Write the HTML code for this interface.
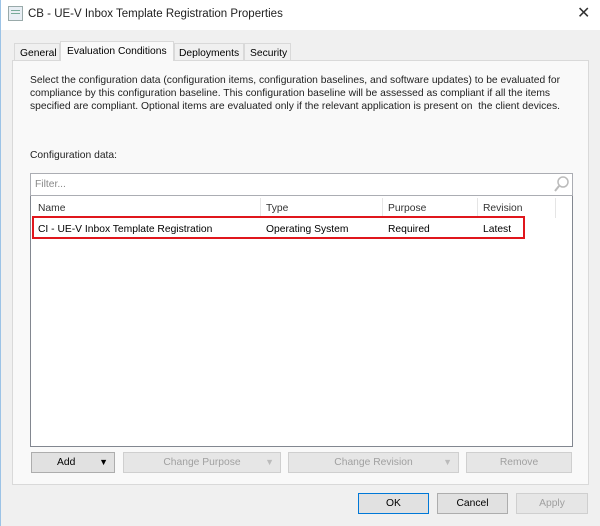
<!DOCTYPE html>
<html><head><meta charset="utf-8"><style>
*{box-sizing:border-box;margin:0;padding:0}
body{width:600px;height:526px;background:#f0f0f0;font-family:"Liberation Sans",sans-serif;font-size:10.3px;color:#000;position:relative;overflow:hidden}
.a{position:absolute}
.t{white-space:nowrap}
.btn{position:absolute;height:21px;border:1px solid #adadad;background:#e1e1e1;text-align:center;line-height:19px;font-size:10.3px}
.dis{color:#a0a0a0;border-color:#cfcfcf;background:#e6e6e6}
</style></head><body>
<div class="a" style="left:0;top:0;width:600px;height:30px;background:#fff"></div>
<div class="a" style="left:0;top:0;width:1px;height:526px;background:#9cc3e6"></div>
<div class="a" style="left:8px;top:6px;width:15px;height:15px;border:1px solid #9aa;background:#e8eef4"></div>
<div class="a" style="left:11px;top:10px;width:9px;height:1px;background:#7a9"></div>
<div class="a" style="left:11px;top:13px;width:9px;height:1px;background:#7a9"></div>
<div class="a t" style="left:28px;top:8px;font-size:11.5px;color:#222">CB - UE-V Inbox Template Registration Properties</div>
<div class="a t" style="left:577px;top:3px;font-size:16px;color:#333">✕</div>

<div class="a" style="left:12px;top:60px;width:577px;height:425px;background:#f9f9f9;border:1px solid #d9d9d9"></div>
<div class="a t" style="left:14px;top:43px;width:46px;height:18px;border:1px solid #d9d9d9;background:#f0f0f0;padding:4px 0 0 5px">General</div>
<div class="a t" style="left:60px;top:41px;width:114px;height:20px;border:1px solid #d9d9d9;border-bottom:none;background:#f9f9f9;padding:4px 0 0 6px">Evaluation Conditions</div>
<div class="a t" style="left:174px;top:43px;width:70px;height:18px;border:1px solid #d9d9d9;background:#f0f0f0;padding:4px 0 0 4px">Deployments</div>
<div class="a t" style="left:244px;top:43px;width:47px;height:18px;border:1px solid #d9d9d9;background:#f0f0f0;padding:4px 0 0 5px">Security</div>

<div class="a t" style="left:30px;top:74px;line-height:13px;color:#222">Select the configuration data (configuration items, configuration baselines, and software updates) to be evaluated for<br>compliance by this configuration baseline. This configuration baseline will be assessed as compliant if all the items<br>specified are compliant. Optional items are evaluated only if the relevant application is present on&nbsp; the client devices.</div>
<div class="a t" style="left:30px;top:150px;color:#222">Configuration data:</div>

<div class="a" style="left:30px;top:173px;width:543px;height:23px;background:#fff;border:1px solid #abadb3"></div>
<div class="a t" style="left:35px;top:179px;color:#888">Filter...</div>
<svg class="a" style="left:553px;top:175px" width="16" height="18"><circle cx="10" cy="7" r="5" fill="none" stroke="#bbb" stroke-width="1.5"/><line x1="6" y1="11" x2="2" y2="16" stroke="#bbb" stroke-width="2"/></svg>

<div class="a" style="left:30px;top:196px;width:543px;height:251px;background:#fff;border:1px solid #828790;border-top:none"></div>
<div class="a" style="left:260px;top:198px;width:1px;height:20px;background:#e5e5e5"></div>
<div class="a" style="left:382px;top:198px;width:1px;height:20px;background:#e5e5e5"></div>
<div class="a" style="left:477px;top:198px;width:1px;height:20px;background:#e5e5e5"></div>
<div class="a" style="left:555px;top:198px;width:1px;height:20px;background:#e5e5e5"></div>
<div class="a t" style="left:38px;top:203px;color:#333">Name</div>
<div class="a t" style="left:266px;top:203px;color:#333">Type</div>
<div class="a t" style="left:388px;top:203px;color:#333">Purpose</div>
<div class="a t" style="left:483px;top:203px;color:#333">Revision</div>
<div class="a" style="left:32px;top:216px;width:493px;height:23px;border:2px solid #e0161c"></div>
<div class="a t" style="left:38px;top:224px">CI - UE-V Inbox Template Registration</div>
<div class="a t" style="left:266px;top:224px">Operating System</div>
<div class="a t" style="left:388px;top:224px">Required</div>
<div class="a t" style="left:483px;top:224px">Latest</div>

<div class="btn" style="left:31px;top:452px;width:84px;text-align:left;padding-left:25px">Add<span style="position:absolute;right:6px;top:0;font-size:9px">▼</span></div>
<div class="btn dis" style="left:123px;top:452px;width:158px">Change Purpose<span style="position:absolute;right:6px;top:0;font-size:9px;color:#bbb">▼</span></div>
<div class="btn dis" style="left:288px;top:452px;width:171px">Change Revision<span style="position:absolute;right:6px;top:0;font-size:9px;color:#bbb">▼</span></div>
<div class="btn dis" style="left:466px;top:452px;width:106px">Remove</div>

<div class="btn" style="left:358px;top:493px;width:71px;border:1px solid #0078d7">OK</div>
<div class="btn" style="left:437px;top:493px;width:71px">Cancel</div>
<div class="btn dis" style="left:516px;top:493px;width:72px">Apply</div>
</body></html>
